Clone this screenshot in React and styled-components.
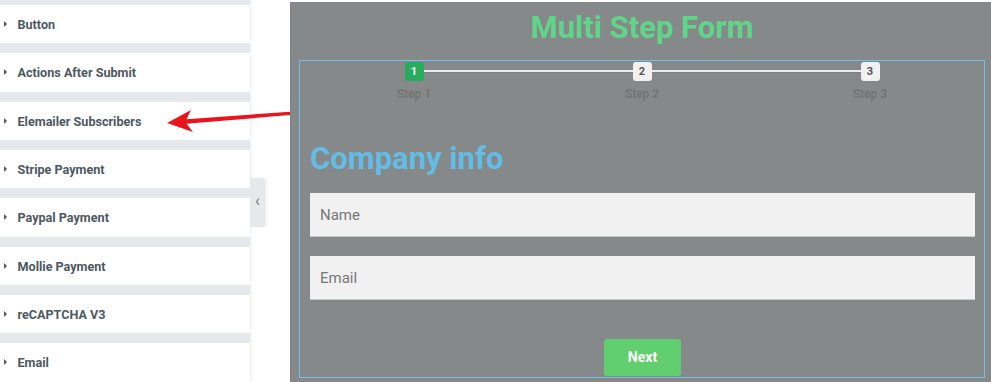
import React from "react";
import styled, { createGlobalStyle } from "styled-components";

const Global = createGlobalStyle`
  html, body { margin: 0; padding: 0; background: #ffffff; }
  body { font-family: Roboto, "Liberation Sans", Arial, sans-serif; overflow: hidden; }
  * { box-sizing: border-box; }
`;

const Page = styled.div`
  position: relative;
  width: 991px;
  height: 382px;
  display: flex;
  overflow: hidden;
`;

const Panel = styled.aside`
  position: relative;
  width: 250px;
  flex: 0 0 250px;
  background: #e6e9ec;
  padding-top: 5px;
  display: flex;
  flex-direction: column;
  gap: 10px;
  box-shadow: 1px 0 2px rgba(0, 0, 0, 0.07);
`;

const SectionRow = styled.div`
  height: 38.33px;
  flex: 0 0 38.33px;
  background: #ffffff;
  display: flex;
  align-items: center;
  padding: 1px 0 0 4px;
  font-size: 12.6px;
  font-weight: 700;
  color: #4d5861;
`;

const Caret = styled.span`
  width: 0;
  height: 0;
  border-top: 3px solid transparent;
  border-bottom: 3px solid transparent;
  border-left: 3.5px solid #4d5861;
  margin-right: 10.5px;
  margin-top: -1px;
`;

const Gutter = styled.div`
  width: 40px;
  flex: 0 0 40px;
  position: relative;
`;

const CollapseTab = styled.div`
  position: absolute;
  left: 0;
  top: 178px;
  width: 15px;
  height: 49px;
  background: #e6e9ec;
  border-radius: 0 3px 3px 0;
  box-shadow: 2px 0 3px rgba(0, 0, 0, 0.06);
  display: flex;
  align-items: center;
  justify-content: center;
  color: #6d7882;
  font-size: 16px;
  line-height: 1;
  padding-bottom: 3px;
`;

const Stage = styled.main`
  flex: 1;
  margin-top: 2px;
  height: 380px;
  background: #868989;
  border-left: 1px solid #7d807f;
  padding: 10px 6px 0 8px;
  display: flex;
  flex-direction: column;
  overflow: hidden;
`;

const Title = styled.h1`
  margin: 0;
  font-size: 31px;
  line-height: 32px;
  font-weight: 700;
  color: #60d488;
  text-align: center;
`;

const FormBox = styled.section`
  margin-top: 16px;
  height: 318px;
  border: 1px solid #6ec1e4;
  display: flex;
  flex-direction: column;
`;

const Steps = styled.div`
  position: relative;
  display: grid;
  grid-template-columns: repeat(3, 1fr);
  padding-top: 1px;
  &::before {
    content: "";
    position: absolute;
    left: calc(100% / 6);
    right: calc(100% / 6);
    top: 9px;
    height: 2px;
    background: #ececec;
    box-shadow: 0 1px 0 rgba(0, 0, 0, 0.08);
  }
`;

const Step = styled.div`
  display: flex;
  flex-direction: column;
  align-items: center;
  position: relative;
`;

const StepNum = styled.div`
  width: 19px;
  height: 19px;
  border-radius: 3px;
  background: ${(p) => (p.$active ? "#27ab5d" : "#f1f1f1")};
  color: ${(p) => (p.$active ? "#ffffff" : "#545454")};
  font-size: 11px;
  font-weight: 700;
  display: flex;
  align-items: center;
  justify-content: center;
`;

const StepLabel = styled.div`
  margin-top: 6px;
  font-size: 12px;
  line-height: 14px;
  font-weight: 500;
  color: #707372;
`;

const FormBody = styled.div`
  padding: 0 9px 0 10px;
  display: flex;
  flex-direction: column;
`;

const Heading = styled.h2`
  margin: 40px 0 0;
  font-size: 31px;
  line-height: 36px;
  font-weight: 700;
  color: #62bde6;
`;

const Field = styled.div`
  height: 43.5px;
  margin-top: ${(p) => p.$gap}px;
  background: #f1f1f1;
  border-bottom: 1px solid #c9c9c9;
  display: flex;
  align-items: center;
  padding-left: 10px;
  font-size: 15px;
  color: #777777;
`;

const NextButton = styled.button`
  align-self: center;
  margin-top: 38.8px;
  width: 77px;
  height: 37px;
  border: none;
  border-radius: 3px;
  background: #61ce70;
  color: #ffffff;
  font-family: Roboto, "Liberation Sans", Arial, sans-serif;
  font-size: 14px;
  font-weight: 700;
  padding: 0;
`;

const ArrowLayer = styled.svg`
  position: absolute;
  left: 0;
  top: 0;
  pointer-events: none;
`;

const sections = [
  "Button",
  "Actions After Submit",
  "Elemailer Subscribers",
  "Stripe Payment",
  "Paypal Payment",
  "Mollie Payment",
  "reCAPTCHA V3",
  "Email",
];

export default function App() {
  return (
    <>
      <Global />
      <Page>
        <Panel>
          {sections.map((s) => (
            <SectionRow key={s}>
              <Caret />
              {s}
            </SectionRow>
          ))}
        </Panel>
        <Gutter>
          <CollapseTab>‹</CollapseTab>
        </Gutter>
        <Stage>
          <Title>Multi Step Form</Title>
          <FormBox>
            <Steps>
              {[1, 2, 3].map((n) => (
                <Step key={n}>
                  <StepNum $active={n === 1}>{n}</StepNum>
                  <StepLabel>Step {n}</StepLabel>
                </Step>
              ))}
            </Steps>
            <FormBody>
              <Heading>Company info</Heading>
              <Field $gap={16.3}>Name</Field>
              <Field $gap={19.5}>Email</Field>
              <NextButton>Next</NextButton>
            </FormBody>
          </FormBox>
        </Stage>
        <ArrowLayer width="991" height="382" viewBox="0 0 991 382">
          <polygon
            points="167,123 191,110 186.5,119.2 290,111.8 290,115 186.5,123.8 193,132"
            fill="#e8151c"
          />
        </ArrowLayer>
      </Page>
    </>
  );
}
